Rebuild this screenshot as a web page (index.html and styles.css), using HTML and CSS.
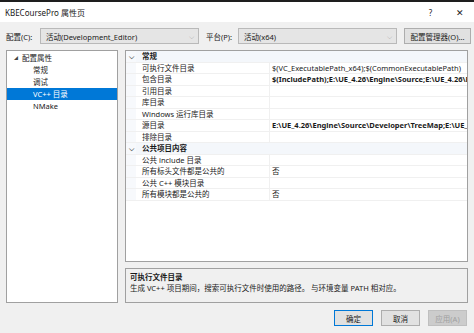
FILE: index.html
```html
<!DOCTYPE html>
<html lang="zh-CN">
<head>
    <meta charset="UTF-8">
    <title>KBECoursePro 属性页</title>
    <link rel="stylesheet" href="styles.css">
</head>
<body>
    <div class="topbar"></div>
    <div class="titlebar">
        <span class="title">KBECoursePro 属性页</span>
        <span class="tb-btn">?</span>
        <span class="tb-btn close">✕</span>
    </div>

    <div class="toolbar">
        <label class="lbl">配置(C):</label>
        <div class="select cfg"><span>活动(Development_Editor)</span><span class="caret">⌵</span></div>
        <label class="lbl plat">平台(P):</label>
        <div class="select platsel"><span>活动(x64)</span><span class="caret">⌵</span></div>
        <div class="btn mgr">配置管理器(O)...</div>
    </div>

    <div class="main">
        <div class="tree">
            <div class="node root"><span class="tri">◢</span>配置属性</div>
            <div class="node child">常规</div>
            <div class="node child">调试</div>
            <div class="node child selected">VC++ 目录</div>
            <div class="node child">NMake</div>
        </div>

        <div class="right">
            <div class="grid">
                <div class="row cat"><span class="gut">⌵</span><span class="name">常规</span></div>
                <div class="row"><span class="gut"></span><span class="name">可执行文件目录</span><span class="val">$(VC_ExecutablePath_x64);$(CommonExecutablePath)</span></div>
                <div class="row"><span class="gut"></span><span class="name">包含目录</span><span class="val bold">$(IncludePath);E:\UE_4.26\Engine\Source;E:\UE_4.26\Engine</span></div>
                <div class="row"><span class="gut"></span><span class="name">引用目录</span><span class="val"></span></div>
                <div class="row"><span class="gut"></span><span class="name">库目录</span><span class="val"></span></div>
                <div class="row"><span class="gut"></span><span class="name">Windows 运行库目录</span><span class="val"></span></div>
                <div class="row"><span class="gut"></span><span class="name">源目录</span><span class="val bold">E:\UE_4.26\Engine\Source\Developer\TreeMap;E:\UE_4.26</span></div>
                <div class="row"><span class="gut"></span><span class="name">排除目录</span><span class="val"></span></div>
                <div class="row cat"><span class="gut">⌵</span><span class="name">公共项目内容</span></div>
                <div class="row"><span class="gut"></span><span class="name">公共 include 目录</span><span class="val"></span></div>
                <div class="row"><span class="gut"></span><span class="name">所有标头文件都是公共的</span><span class="val">否</span></div>
                <div class="row"><span class="gut"></span><span class="name">公共 C++ 模块目录</span><span class="val"></span></div>
                <div class="row"><span class="gut"></span><span class="name">所有模块都是公共的</span><span class="val">否</span></div>
            </div>
            <div class="desc">
                <div class="desc-title">可执行文件目录</div>
                <div class="desc-text">生成 VC++ 项目期间，搜索可执行文件时使用的路径。 与环境变量 PATH 相对应。</div>
            </div>
        </div>
    </div>

    <div class="footer">
        <div class="btn ok">确定</div>
        <div class="btn">取消</div>
        <div class="btn disabled">应用(A)</div>
    </div>
</body>
</html>
```

FILE: styles.css
```css
body {
    margin: 0;
    width: 474px;
    height: 333px;
    overflow: hidden;
    background: #f0f0f0;
    font-family: "Noto Sans", "Noto Sans CJK SC", sans-serif;
    font-size: 7.5px;
    color: #1a1a1a;
}
.topbar {
    height: 2px;
    background: #1e1e1e;
}
.titlebar {
    height: 20px;
    background: #fff;
    display: flex;
    align-items: center;
    padding-left: 5px;
}
.title {
    font-size: 8px;
    flex: 1;
}
.tb-btn {
    width: 29px;
    text-align: center;
    font-size: 8px;
}
.tb-btn.close {
    font-size: 9px;
}
.toolbar {
    display: flex;
    align-items: center;
    height: 16px;
    margin-top: 6px;
    padding-left: 6px;
}
.lbl {
    width: 34px;
}
.lbl.plat {
    width: 32px;
    margin-left: 7px;
}
.select {
    height: 14px;
    border: 1px solid #b9b9b9;
    background: #e5e5e5;
    display: flex;
    align-items: center;
    justify-content: space-between;
    padding: 0 4px 0 5px;
}
.select.cfg {
    width: 148px;
}
.select.platsel {
    width: 148px;
}
.caret {
    color: #777;
    font-size: 7px;
}
.btn {
    height: 14px;
    border: 1px solid #adadad;
    background: #e1e1e1;
    display: flex;
    align-items: center;
    justify-content: center;
    width: 28px;
}
.btn.mgr {
    width: 65px;
    margin-left: 7px;
}
.main {
    display: flex;
    margin-top: 6px;
    padding-left: 6px;
    height: 253px;
}
.tree {
    width: 110px;
    border: 1px solid #a0a0a0;
    background: #fff;
    padding-top: 1px;
}
.node {
    height: 12px;
    line-height: 12px;
    white-space: nowrap;
}
.node.root {
    padding-left: 7px;
}
.tri {
    font-size: 4px;
    color: #444;
    margin-right: 4px;
    vertical-align: middle;
}
.node.child {
    padding-left: 26px;
}
.node.selected {
    background: #0078d7;
    color: #fff;
}
.right {
    margin-left: 7px;
    width: 343px;
    display: flex;
    flex-direction: column;
    gap: 6px;
}
.grid {
    height: 210px;
    border: 1px solid #a0a0a0;
    background: #fff;
    overflow: hidden;
}
.row {
    display: flex;
    height: 11.5px;
    line-height: 11px;
    white-space: nowrap;
    box-sizing: border-box;
    border-bottom: 1px solid #f0f0f0;
}
.gut {
    width: 10px;
    flex: none;
    background: #f7f9fc;
    text-align: center;
    font-size: 7px;
    color: #555;
}
.name {
    width: 127px;
    flex: none;
    padding-left: 6px;
    border-right: 1px solid #f0f0f0;
}
.val {
    flex: 1;
    padding-left: 2px;
}
.val.bold {
    font-weight: bold;
}
.row.cat {
    background: #f4f7fb;
    font-weight: bold;
}
.row.cat .name {
    border-right: none;
}
.desc {
    border: 1px solid #a0a0a0;
    padding: 3px 4px;
    box-sizing: border-box;
    height: 35px;
}
.desc-title {
    font-weight: bold;
    line-height: 11px;
}
.desc-text {
    line-height: 11px;
}
.footer {
    display: flex;
    justify-content: flex-end;
    gap: 8px;
    margin-top: 7px;
    padding-right: 7px;
}
.footer .btn {
    width: 37px;
}
.btn.ok {
    border-color: #0078d7;
}
.btn.disabled {
    color: #a0a0a0;
    background: #cccccc;
    border-color: #bfbfbf;
}
```
